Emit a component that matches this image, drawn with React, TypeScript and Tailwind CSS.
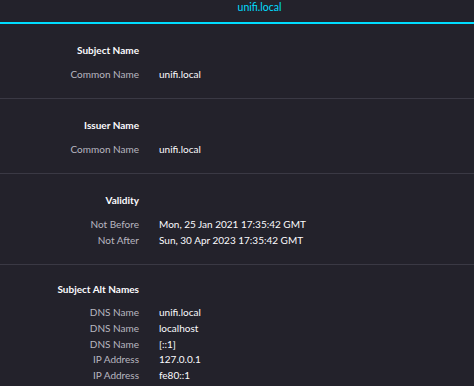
const sections: { title: string; rows: [string, string][] }[] = [
  { title: 'Subject Name', rows: [['Common Name', 'unifi.local']] },
  { title: 'Issuer Name', rows: [['Common Name', 'unifi.local']] },
  {
    title: 'Validity',
    rows: [
      ['Not Before', 'Mon, 25 Jan 2021 17:35:42 GMT'],
      ['Not After', 'Sun, 30 Apr 2023 17:35:42 GMT'],
    ],
  },
  {
    title: 'Subject Alt Names',
    rows: [
      ['DNS Name', 'unifi.local'],
      ['DNS Name', 'localhost'],
      ['DNS Name', '[::1]'],
      ['IP Address', '127.0.0.1'],
      ['IP Address', 'fe80::1'],
    ],
  },
]

export default function App() {
  return (
    <div className="w-[474px] h-[386px] overflow-hidden bg-[#23222b] font-['Lato',sans-serif] text-[10px] leading-4">
      <div className="h-[24px] border-b-2 border-[#00ddff] flex justify-center pl-[45px]">
        <span className="text-[#00ddff] text-[10.5px] leading-[14px]">unifi.local</span>
      </div>
      {sections.map((s, i) => {
        const last = i === sections.length - 1
        return (
          <div key={i} className={last ? 'pt-4 pb-4 leading-[15.75px]' : 'pt-[18px] pb-4 border-b border-[#3a3944]'}>
            <div className="grid grid-cols-[139px_1fr] gap-x-5">
              <div className="text-right font-bold text-[#fbfbfe] mb-2 leading-4">{s.title}</div>
              <div />
              {s.rows.map(([k, v], j) => (
                <div key={j} className="contents">
                  <div className="text-right text-[#b8b7c0]">{k}</div>
                  <div className="text-[#fbfbfe]">{v}</div>
                </div>
              ))}
            </div>
          </div>
        )
      })}
    </div>
  )
}
